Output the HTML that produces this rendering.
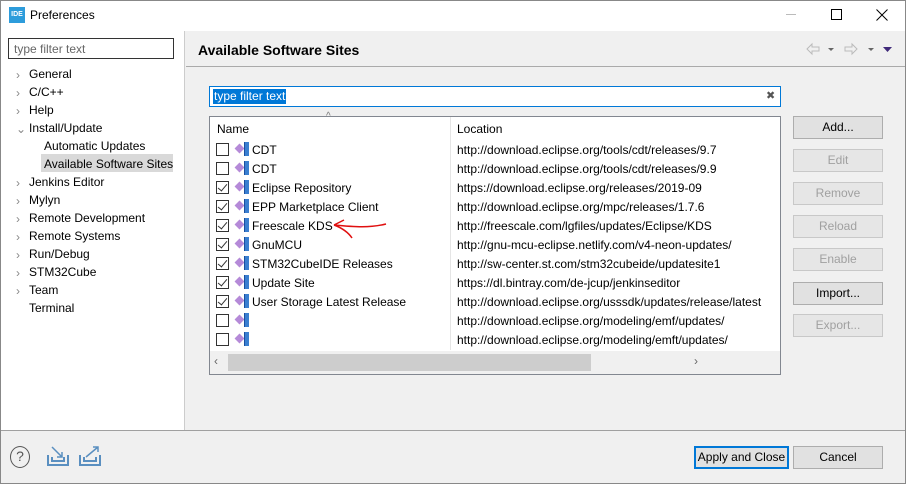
<!DOCTYPE html><html><head><style>
*{box-sizing:border-box;margin:0;padding:0}
body{width:906px;height:484px;background:#f0f0f0;font-family:"Liberation Sans",sans-serif;font-size:12px;color:#000;position:relative;overflow:hidden}
.a{position:absolute;white-space:nowrap}
.btn{position:absolute;width:90px;height:23px;border:1px solid #adadad;background:#e1e1e1;text-align:center;line-height:21px}
.dis{color:#a0a0a0;background:#e6e6e6;border-color:#c8c8c8}
.cb{position:absolute;left:216px;width:13px;height:13px;border:1px solid #333;background:#fff}
.cb.c::after{content:"";position:absolute;left:3px;top:0px;width:4px;height:8px;border:solid #333;border-width:0 1.5px 1.5px 0;transform:rotate(40deg)}
.ic{position:absolute;left:235px;width:14px;height:14px}
.ic::before{content:"";position:absolute;left:1px;top:3px;width:7px;height:7px;background:#b58ad8;transform:rotate(45deg)}
.ic::after{content:"";position:absolute;left:9px;top:0;width:4px;height:14px;background:#3a7fd0;border-left:1px solid #1a4fa0}
</style></head><body>
<div class="a" style="left:0;top:0;width:906px;height:31px;background:#fff;border:1px solid #888;border-bottom:none"></div>
<div class="a" style="left:9px;top:7px;width:16px;height:16px;background:#2d9cdb;color:#fff;font-size:7px;font-weight:bold;line-height:16px;text-align:center">IDE</div>
<div class="a" style="left:30px;top:8px;font-size:12px">Preferences</div>
<div class="a" style="left:786px;top:14px;width:10px;height:1px;background:#bbb"></div>
<div class="a" style="left:831px;top:9px;width:11px;height:11px;border:1px solid #000"></div>
<svg class="a" style="left:876px;top:9px" width="12" height="12"><path d="M0.5 0.5 L11.5 11.5 M11.5 0.5 L0.5 11.5" stroke="#000" stroke-width="1"/></svg>
<div class="a" style="left:1px;top:31px;width:184px;height:399px;background:#fff;border-right:1px solid #ccc"></div>
<div class="a" style="left:8px;top:38px;width:166px;height:21px;border:1px solid #333;background:#fff;color:#666;padding:3px 5px">type filter text</div>
<div class="a" style="left:41px;top:154px;width:132px;height:18px;background:#d9d9d9"></div>
<div class="a" style="left:16px;top:66px;color:#888;line-height:18px">›<br>›<br>›<br>⌄<br><br><br>›<br>›<br>›<br>›<br>›<br>›<br>›</div>
<div class="a" style="left:29px;top:65px;line-height:18px">General<br>C/C++<br>Help<br>Install/Update<br><span style="padding-left:15px">Automatic Updates</span><br><span style="padding-left:15px">Available Software Sites</span><br>Jenkins Editor<br>Mylyn<br>Remote Development<br>Remote Systems<br>Run/Debug<br>STM32Cube<br>Team<br>Terminal</div>
<div class="a" style="left:186px;top:66px;width:720px;height:1px;background:#aaa"></div>
<div class="a" style="left:198px;top:42px;font-size:14px;font-weight:bold">Available Software Sites</div>
<svg class="a" style="left:805px;top:42px" width="90" height="14"><path d="M2 7 L7 2 V5 H14 V9 H7 V12 Z" fill="none" stroke="#bbb"/><path d="M23 6 h6 l-3 3z" fill="#666"/><path d="M52 7 L47 2 V5 H40 V9 H47 V12 Z" fill="none" stroke="#bbb"/><path d="M63 6 h6 l-3 3z" fill="#666"/><path d="M78 5 h9 l-4.5 5z" fill="#402a7a"/></svg>
<div class="a" style="left:209px;top:86px;width:572px;height:21px;border:1px solid #0078d7;background:#fff"></div>
<div class="a" style="left:213px;top:89px;background:#0078d7;color:#fff;padding:0 1px;line-height:15px">type filter text</div>
<div class="a" style="left:766px;top:89px;color:#555;font-size:11px">✖</div>
<div class="a" style="left:209px;top:116px;width:572px;height:259px;border:1px solid #828790;background:#fff"></div>
<div class="a" style="left:450px;top:117px;width:1px;height:233px;background:#e5e5e5"></div>
<div class="a" style="left:326px;top:111px;color:#777;font-size:10px">^</div>
<div class="a" style="left:217px;top:122px">Name</div><div class="a" style="left:457px;top:122px">Location</div>
<div class="cb" style="top:143px"></div><div class="ic" style="top:142px"></div><div class="a" style="left:252px;top:143px">CDT</div><div class="a" style="left:457px;top:143px">http://download.eclipse.org/tools/cdt/releases/9.7</div>
<div class="cb" style="top:162px"></div><div class="ic" style="top:161px"></div><div class="a" style="left:252px;top:162px">CDT</div><div class="a" style="left:457px;top:162px">http://download.eclipse.org/tools/cdt/releases/9.9</div>
<div class="cb c" style="top:181px"></div><div class="ic" style="top:180px"></div><div class="a" style="left:252px;top:181px">Eclipse Repository</div><div class="a" style="left:457px;top:181px">https://download.eclipse.org/releases/2019-09</div>
<div class="cb c" style="top:200px"></div><div class="ic" style="top:199px"></div><div class="a" style="left:252px;top:200px">EPP Marketplace Client</div><div class="a" style="left:457px;top:200px">http://download.eclipse.org/mpc/releases/1.7.6</div>
<div class="cb c" style="top:219px"></div><div class="ic" style="top:218px"></div><div class="a" style="left:252px;top:219px">Freescale KDS</div><div class="a" style="left:457px;top:219px">http://freescale.com/lgfiles/updates/Eclipse/KDS</div>
<div class="cb c" style="top:238px"></div><div class="ic" style="top:237px"></div><div class="a" style="left:252px;top:238px">GnuMCU</div><div class="a" style="left:457px;top:238px">http://gnu-mcu-eclipse.netlify.com/v4-neon-updates/</div>
<div class="cb c" style="top:257px"></div><div class="ic" style="top:256px"></div><div class="a" style="left:252px;top:257px">STM32CubeIDE Releases</div><div class="a" style="left:457px;top:257px">http://sw-center.st.com/stm32cubeide/updatesite1</div>
<div class="cb c" style="top:276px"></div><div class="ic" style="top:275px"></div><div class="a" style="left:252px;top:276px">Update Site</div><div class="a" style="left:457px;top:276px">https://dl.bintray.com/de-jcup/jenkinseditor</div>
<div class="cb c" style="top:295px"></div><div class="ic" style="top:294px"></div><div class="a" style="left:252px;top:295px">User Storage Latest Release</div><div class="a" style="left:457px;top:295px">http://download.eclipse.org/usssdk/updates/release/latest</div>
<div class="cb" style="top:314px"></div><div class="ic" style="top:313px"></div><div class="a" style="left:457px;top:314px">http://download.eclipse.org/modeling/emf/updates/</div>
<div class="cb" style="top:333px"></div><div class="ic" style="top:332px"></div><div class="a" style="left:457px;top:333px">http://download.eclipse.org/modeling/emft/updates/</div>
<div class="a" style="left:210px;top:351px;width:570px;height:23px;background:#f0f0f0"></div>
<div class="a" style="left:228px;top:354px;width:363px;height:17px;background:#cdcdcd"></div>
<div class="a" style="left:214px;top:354px;color:#666">‹</div><div class="a" style="left:694px;top:354px;color:#666">›</div>
<svg class="a" style="left:330px;top:218px" width="60" height="22"><path d="M56 6 C40 10 25 9 4 7 M4 7 L14 2 M4 7 C12 10 18 14 22 20" stroke="#e01010" stroke-width="1.5" fill="none"/></svg>
<div class="btn" style="left:793px;top:116px">Add...</div>
<div class="btn dis" style="left:793px;top:149px">Edit</div>
<div class="btn dis" style="left:793px;top:182px">Remove</div>
<div class="btn dis" style="left:793px;top:215px">Reload</div>
<div class="btn dis" style="left:793px;top:248px">Enable</div>
<div class="btn" style="left:793px;top:282px">Import...</div>
<div class="btn dis" style="left:793px;top:314px">Export...</div>
<div class="a" style="left:0;top:430px;width:906px;height:1px;background:#a0a0a0"></div>
<div class="a" style="left:0;top:31px;width:1px;height:453px;background:#888"></div><div class="a" style="left:905px;top:31px;width:1px;height:453px;background:#888"></div>
<div class="a" style="left:0;top:483px;width:906px;height:1px;background:#888"></div>
<div class="a" style="left:10px;top:446px;width:20px;height:22px;border:1.5px solid #555;border-radius:50%;text-align:center;line-height:19px;font-size:14px;color:#555">?</div>
<svg class="a" style="left:46px;top:445px" width="60" height="22"><path d="M2 10 v10 h20 v-10 M6 12 v4 h12 v-4" stroke="#5a8fc0" stroke-width="2" fill="none"/><path d="M6 2 l10 10 m0 -5 v5 h-5" stroke="#5a8fc0" stroke-width="1.5" fill="none"/><path d="M34 10 v10 h20 v-10 M38 12 v4 h12 v-4" stroke="#5a8fc0" stroke-width="2" fill="none"/><path d="M40 12 l12 -10 m-5 0 h5 v5" stroke="#5a8fc0" stroke-width="1.5" fill="none"/></svg>
<div class="btn" style="left:694px;top:446px;width:95px;border:2px solid #0078d7;line-height:19px">Apply and Close</div>
<div class="btn" style="left:793px;top:446px">Cancel</div>
</body></html>
